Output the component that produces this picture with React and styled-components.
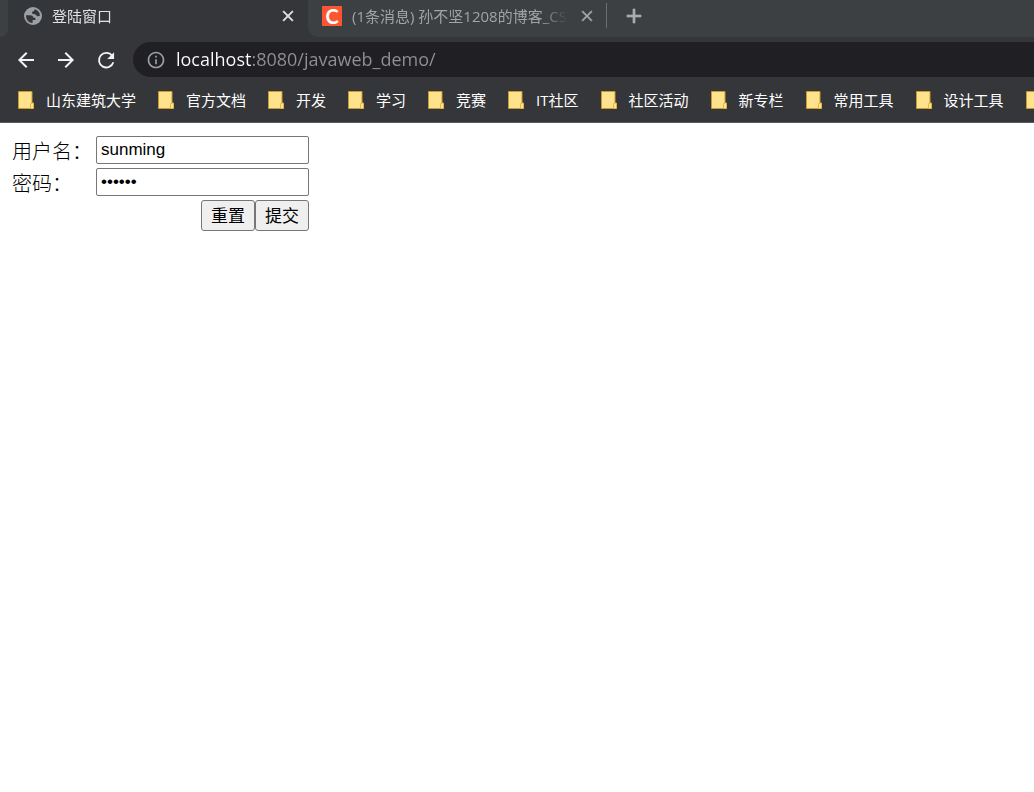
import React, { useState } from "react";
import styled, { createGlobalStyle } from "styled-components";
import {
  MdAdd,
  MdArrowBack,
  MdArrowForward,
  MdClose,
  MdInfoOutline,
} from "react-icons/md";

const folders = [
  "山东建筑大学",
  "官方文档",
  "开发",
  "学习",
  "竞赛",
  "IT社区",
  "社区活动",
  "新专栏",
  "常用工具",
  "设计工具",
  "其他",
];

function GlobeIcon() {
  return (
    <svg width="18" height="18" viewBox="0 0 18 18" aria-hidden="true">
      <circle cx="9" cy="9" r="9" fill="#9aa0a6" />
      <path
        d="M2 8.300h4.200c2 0 3.200 1 3.200 2.400h2v2.200h-2.800v3.100c-3.900 0-6.700-3.200-6.600-7.700z"
        fill="#35363a"
      />
      <path
        d="M10.500 2.200c3 .6 5.300 3.200 5.500 6.300-.8.700-2 .9-3 .4-.9-.4-1-1.400-2-1.600-1.400-.2-2.800-.2-3-1.600 0-1.300 1.200-1.400 2-1.700.5-.3.200-1.200.5-1.800z"
        fill="#35363a"
      />
    </svg>
  );
}

function ReloadIcon() {
  return (
    <svg width="22" height="22" viewBox="0 0 24 24" aria-hidden="true">
      <path
        d="M18.600 7.200A8 8 0 1 0 20 14.500"
        fill="none"
        stroke="currentColor"
        strokeWidth="2"
      />
      <path d="M20.800 3.600v7.400h-7.400z" fill="currentColor" />
    </svg>
  );
}

function FolderIcon() {
  return (
    <svg width="16" height="18" viewBox="0 0 16 18" aria-hidden="true">
      <path d="M0.5 0.5h13.500v17h-13.500z" fill="#ffe38c" stroke="#c99a2e" />
      <path d="M12.500 17.500v-4q0-1.500 1.500-1.500h1.500v5.500z" fill="#ffe38c" stroke="#e0b440" />
    </svg>
  );
}

function Bookmark({ name }) {
  return (
    <BookmarkLink href="#">
      <FolderIcon />
      {name}
    </BookmarkLink>
  );
}

function LoginForm() {
  const [username, setUsername] = useState("sunming");
  const [password, setPassword] = useState("123456");

  return (
    <form onSubmit={(e) => e.preventDefault()}>
      <FormTable>
        <tbody>
          <tr>
            <td>
              <Label htmlFor="username">用户名：</Label>
            </td>
            <td>
              <Field
                id="username"
                type="text"
                value={username}
                onChange={(e) => setUsername(e.target.value)}
              />
            </td>
          </tr>
          <tr>
            <td>
              <Label htmlFor="password">密码：</Label>
            </td>
            <td>
              <Field
                id="password"
                type="password"
                value={password}
                onChange={(e) => setPassword(e.target.value)}
              />
            </td>
          </tr>
          <tr>
            <td colSpan={2}>
              <Actions>
                <FormButton
                  type="button"
                  onClick={() => {
                    setUsername("");
                    setPassword("");
                  }}
                >
                  重置
                </FormButton>
                <FormButton type="submit">提交</FormButton>
              </Actions>
            </td>
          </tr>
        </tbody>
      </FormTable>
    </form>
  );
}

function App() {
  const [url, setUrl] = useState("localhost:8080/javaweb_demo/");

  return (
    <>
      <GlobalStyle />
      <Chrome>
        <TabStrip>
          <StripStart />
          <Tab $active>
            <GlobeIcon />
            <TabTitle>登陆窗口</TabTitle>
            <IconButton $bold aria-label="Close tab">
              <MdClose size={18} />
            </IconButton>
          </Tab>
          <StripRest>
            <Tab>
              <Logo>C</Logo>
              <TabTitle>(1条消息) 孙不坚1208的博客_CSDN博客</TabTitle>
              <IconButton $bold aria-label="Close tab">
                <MdClose size={18} />
              </IconButton>
            </Tab>
            <Divider />
            <IconButton $bold aria-label="New tab">
              <MdAdd size={24} />
            </IconButton>
          </StripRest>
        </TabStrip>
        <Toolbar>
          <NavButtons>
            <IconButton aria-label="Back">
              <MdArrowBack size={24} />
            </IconButton>
            <IconButton aria-label="Forward">
              <MdArrowForward size={24} />
            </IconButton>
            <IconButton aria-label="Reload">
              <ReloadIcon />
            </IconButton>
          </NavButtons>
          <AddressBar>
            <MdInfoOutline size={20} />
            <Address
              aria-label="Address"
              value={url}
              spellCheck={false}
              onChange={(e) => setUrl(e.target.value)}
            />
          </AddressBar>
        </Toolbar>
        <Bookmarks>
          {folders.map((name) => (
            <Bookmark key={name} name={name} />
          ))}
        </Bookmarks>
      </Chrome>
      <Page>
        <LoginForm />
      </Page>
    </>
  );
}

const GlobalStyle = createGlobalStyle`
  * {
    box-sizing: border-box;
  }

  body {
    margin: 0;
    background: #fff;
    font-family: "Open Sans", "Noto Sans CJK SC", sans-serif;
  }

  svg {
    display: block;
    flex-shrink: 0;
  }
`;

const Chrome = styled.header`
  background: #35363a;
  border-bottom: 1px solid #5b5c60;
  overflow: hidden;
`;

const TabStrip = styled.div`
  display: flex;
  height: 37px;
`;

const StripStart = styled.div`
  width: 8px;
  background: #3c4043;
  border-bottom-right-radius: 8px;
`;

const StripRest = styled.div`
  flex: 1;
  display: flex;
  align-items: center;
  padding-bottom: 6px;
  background: #3c4043;
  border-bottom-left-radius: 10px;
  color: #a9acb0;
`;

const Tab = styled.div`
  display: flex;
  align-items: center;
  gap: 10px;
  width: ${(props) => (props.$active ? "300px" : "298px")};
  padding: ${(props) => (props.$active ? "0 11px 6px 16px" : "0 10px 0 14px")};
  color: ${(props) => (props.$active ? "#dfe1e5" : "#a0a3a7")};
`;

const TabTitle = styled.span`
  flex: 1;
  overflow: hidden;
  font-size: 15px;
  line-height: 24px;
  white-space: nowrap;
  mask-image: linear-gradient(to right, #000 calc(100% - 28px), transparent);
`;

const Logo = styled.span`
  width: 20px;
  height: 20px;
  flex-shrink: 0;
  background: #fc5531;
  color: #fff;
  font-family: Lato, sans-serif;
  font-size: 20px;
  font-weight: bold;
  line-height: 20px;
  text-align: center;
`;

const Divider = styled.div`
  width: 1px;
  height: 25px;
  background: #6b6e72;
`;

const IconButton = styled.button`
  display: inline-flex;
  align-items: center;
  justify-content: center;
  min-width: 24px;
  padding: 0;
  border: 0;
  background: none;
  color: inherit;
  cursor: pointer;

  ${Tab} & {
    min-width: 0;
  }

  svg {
    stroke-width: ${(props) => (props.$bold ? "0.7" : "0")};
  }

  /* the empty bounding box of the icon must not get an outline */
  svg[stroke] path[fill="none"] {
    stroke: none;
  }

  ${Divider} + & {
    margin-left: 15px;
  }
`;

const Toolbar = styled.div`
  display: flex;
  align-items: center;
  height: 45px;
  padding-left: 14px;
  color: #f1f3f4;
`;

const NavButtons = styled.div`
  display: flex;
  gap: 16px;
  margin-right: 15px;
`;

const AddressBar = styled.div`
  flex: 1;
  display: flex;
  align-items: center;
  gap: 10px;
  height: 35px;
  padding-left: 13px;
  background: #202024;
  border-radius: 18px 0 0 18px;
  color: #9aa0a6;
`;

/* the host part is lighter than the rest of the url */
const Address = styled.input`
  flex: 1;
  min-width: 0;
  height: 30px;
  padding: 0 0 2px;
  border: 0;
  outline: 0;
  background: linear-gradient(to right, #fff 76px, #8e9195 76px);
  background-clip: text;
  color: transparent;
  caret-color: #fff;
  font-family: "Open Sans", sans-serif;
  font-size: 18px;
`;

const Bookmarks = styled.nav`
  display: flex;
  gap: 22px;
  height: 40px;
  padding: 0 0 4px 18px;
`;

const BookmarkLink = styled.a`
  display: flex;
  align-items: center;
  flex-shrink: 0;
  gap: 12px;
  color: #fff;
  font-size: 15px;
  line-height: 24px;
  text-decoration: none;
  white-space: nowrap;
`;

const Page = styled.main`
  padding: 9px 8px;
`;

const FormTable = styled.table`
  border-spacing: 4px;

  td {
    padding: 0;
  }
`;

const Label = styled.label`
  display: block;
  padding-top: 4px;
  font-size: 20px;
  font-weight: 300;
  line-height: 24px;
  white-space: nowrap;
`;

const Field = styled.input`
  display: block;
  width: 213px;
  height: 28px;
  padding: 1px 4px;
  border: 1px solid #767676;
  border-radius: 2px;
  background: #fff;
  color: #000;
  font-family: "Liberation Sans", Arial, sans-serif;
  font-size: 17px;
`;

const Actions = styled.div`
  display: flex;
  justify-content: flex-end;
`;

const FormButton = styled.button`
  height: 31px;
  padding: 0 9px 2px;
  border: 1px solid #767676;
  border-radius: 3px;
  background: #efefef;
  color: #000;
  font-family: "Liberation Sans", "Noto Sans CJK SC", sans-serif;
  font-size: 17px;
`;

export default App;
